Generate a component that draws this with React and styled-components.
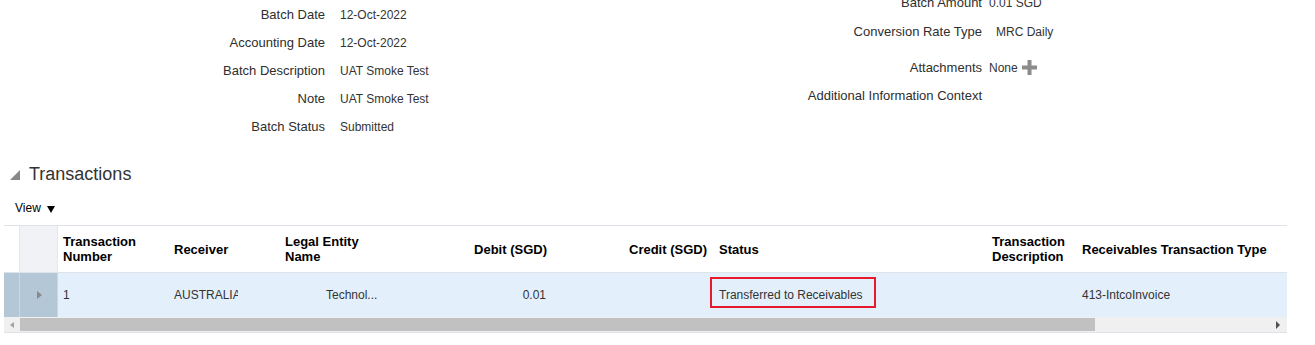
import React from "react";
import styled, { createGlobalStyle } from "styled-components";

const Global = createGlobalStyle`
  html, body { margin: 0; padding: 0; background: #fff; overflow: hidden; }
  body { font-family: "Liberation Sans", Arial, sans-serif; color: #333; }
`;

const Page = styled.div`
  width: 1315px;
  height: 345px;
  overflow: hidden;
`;

const Form = styled.div`
  display: flex;
  align-items: flex-start;
`;

const LeftFields = styled.div`
  width: 660px;
  display: grid;
  grid-template-columns: 325px auto;
  column-gap: 15px;
  grid-auto-rows: 28px;
  align-items: center;
`;

const RightFields = styled.div`
  margin-top: -12px;
  display: flex;
  flex-direction: column;
`;

const RightRow = styled.div`
  display: grid;
  grid-template-columns: 322px auto;
  column-gap: 7px;
  height: 28px;
  align-items: center;
  margin-top: ${(p) => p.$mt || 0}px;
`;

const Label = styled.div`
  text-align: right;
  font-size: 13px;
  color: #2e2e2e;
  white-space: nowrap;
`;

const Value = styled.div`
  font-size: 12px;
  color: #333;
  white-space: nowrap;
  padding-top: 1px;
  padding-left: ${(p) => p.$indent || 0}px;
  display: flex;
  align-items: center;
  gap: 4px;
`;

const PlusIcon = styled.svg`
  width: 15px;
  height: 15px;
  display: block;
`;

const SectionHeader = styled.div`
  margin-top: 20px;
  height: 28px;
  display: flex;
  align-items: center;
  padding-left: 10px;
  gap: 9px;
`;

const Disclosure = styled.span`
  width: 0;
  height: 0;
  border-style: solid;
  border-width: 0 0 10px 10px;
  border-color: transparent transparent #888 transparent;
  margin-top: 1px;
`;

const SectionTitle = styled.h2`
  margin: 0;
  font-size: 18px;
  font-weight: normal;
  color: #333;
`;

const Toolbar = styled.div`
  margin-top: 8px;
  height: 24px;
  display: flex;
  align-items: center;
  padding-left: 15px;
  gap: 6px;
  font-size: 12px;
  color: #000;
`;

const DownCaret = styled.span`
  width: 0;
  height: 0;
  border-style: solid;
  border-width: 7px 4.5px 0 4.5px;
  border-color: #000 transparent transparent transparent;
  margin-top: 2px;
`;

const Table = styled.div`
  margin: 5px 0 0 4px;
  width: 1283px;
  border-top: 1px solid #dde3e8;
  border-bottom: 1px solid #dde3e8;
`;

const COLS = "16px 38px 110px 111px 112px 161px 160px 275px 90px 210px";

const Row = styled.div`
  display: grid;
  grid-template-columns: ${COLS};
  height: ${(p) => p.$h}px;
  background: ${(p) => p.$bg || "#fff"};
  border-bottom: ${(p) => (p.$line ? "1px solid #dde3e8" : "none")};
`;

const Gutter = styled.div`
  background: ${(p) => p.$bg};
  border-right: 1px solid ${(p) => p.$line};
`;

const Selector = styled.div`
  background: ${(p) => p.$bg};
  border-right: 1px solid ${(p) => p.$line};
  display: flex;
  align-items: center;
  justify-content: center;
`;

const RowArrow = styled.span`
  width: 0;
  height: 0;
  border-style: solid;
  border-width: 4.5px 0 4.5px 5px;
  border-color: transparent transparent transparent #8a8a8a;
  margin-left: 1px;
`;

const HeadCell = styled.div`
  display: flex;
  align-items: center;
  justify-content: ${(p) => (p.$right ? "flex-end" : "flex-start")};
  text-align: ${(p) => (p.$right ? "right" : "left")};
  padding: 0 ${(p) => (p.$right ? "5px" : "0")} 0 ${(p) => p.$pl ?? 5}px;
  font-size: 13px;
  font-weight: bold;
  line-height: 15px;
  color: #000;
`;

const Cell = styled.div`
  position: relative;
  display: flex;
  align-items: center;
  justify-content: ${(p) => (p.$right ? "flex-end" : "flex-start")};
  padding: 0 ${(p) => (p.$right ? "6px" : "0")} 0 ${(p) => p.$pl ?? 5}px;
  font-size: 12px;
  color: #333;
  white-space: nowrap;
  overflow: ${(p) => (p.$visible ? "visible" : "hidden")};
`;

const Clip = styled.span`
  display: block;
  max-width: ${(p) => p.$w}px;
  overflow: hidden;
  white-space: nowrap;
`;

const Highlight = styled.span`
  position: absolute;
  left: -2px;
  top: 4px;
  width: 166px;
  height: 31px;
  box-sizing: border-box;
  border: 2px solid #e8192c;
  pointer-events: none;
`;

const Scrollbar = styled.div`
  display: flex;
  height: 15px;
  background: #f0f0f0;
`;

const ScrollEnd = styled.div`
  width: 16px;
  display: flex;
  align-items: center;
  justify-content: center;
`;

const Thumb = styled.div`
  width: 1075px;
  background: #c1c1c1;
  margin: 1px 0;
`;

const Track = styled.div`
  flex: 1;
  display: flex;
  justify-content: flex-end;
  align-items: center;
`;

const ArrowLeft = styled.span`
  width: 0;
  height: 0;
  border-style: solid;
  border-width: 3.5px 4px 3.5px 0;
  border-color: transparent #a3a3a3 transparent transparent;
`;

const ArrowRight = styled.span`
  width: 0;
  height: 0;
  border-style: solid;
  border-width: 4px 0 4px 4px;
  border-color: transparent transparent transparent #505050;
  margin-right: 7px;
`;

const leftFields = [
  ["Batch Date", "12-Oct-2022"],
  ["Accounting Date", "12-Oct-2022"],
  ["Batch Description", "UAT Smoke Test"],
  ["Note", "UAT Smoke Test"],
  ["Batch Status", "Submitted"],
];

export default function App() {
  return (
    <Page>
      <Global />
      <Form>
        <LeftFields>
          {leftFields.map(([l, v]) => (
            <React.Fragment key={l}>
              <Label>{l}</Label>
              <Value>{v}</Value>
            </React.Fragment>
          ))}
        </LeftFields>
        <RightFields>
          <RightRow>
            <Label>Batch Amount</Label>
            <Value>0.01 SGD</Value>
          </RightRow>
          <RightRow $mt={1}>
            <Label>Conversion Rate Type</Label>
            <Value $indent={7}>MRC Daily</Value>
          </RightRow>
          <RightRow $mt={8}>
            <Label>Attachments</Label>
            <Value>
              None
              <PlusIcon viewBox="0 0 15 15">
                <rect x="5.5" y="0" width="4" height="15" fill="#8c8c8c" />
                <rect x="0" y="5.5" width="15" height="4" fill="#8c8c8c" />
              </PlusIcon>
            </Value>
          </RightRow>
          <RightRow>
            <Label>Additional Information Context</Label>
            <Value />
          </RightRow>
        </RightFields>
      </Form>

      <SectionHeader>
        <Disclosure />
        <SectionTitle>Transactions</SectionTitle>
      </SectionHeader>

      <Toolbar>
        View <DownCaret />
      </Toolbar>

      <Table>
        <Row $h={46} $line>
          <Gutter $bg="#fff" $line="#e4e8ec" />
          <Selector $bg="#f1f2f5" $line="#e4e8ec" />
          <HeadCell>Transaction<br />Number</HeadCell>
          <HeadCell $pl={6}>Receiver</HeadCell>
          <HeadCell $pl={6}>Legal Entity<br />Name</HeadCell>
          <HeadCell $right>Debit (SGD)</HeadCell>
          <HeadCell $right>Credit (SGD)</HeadCell>
          <HeadCell $pl={7}>Status</HeadCell>
          <HeadCell>Transaction<br />Description</HeadCell>
          <HeadCell>Receivables Transaction Type</HeadCell>
        </Row>
        <Row $h={44} $bg="#e3effb">
          <Gutter $bg="#b3c7d7" $line="#c9d7e2" />
          <Selector $bg="#b3c7d7" $line="#c9d7e2">
            <RowArrow />
          </Selector>
          <Cell>1</Cell>
          <Cell $pl={6}>
            <Clip $w={64}>AUSTRALIA PTY LTD</Clip>
          </Cell>
          <Cell $pl={47}>Technol...</Cell>
          <Cell $right>0.01</Cell>
          <Cell $right />
          <Cell $visible $pl={7}>
            Transferred to Receivables
            <Highlight />
          </Cell>
          <Cell />
          <Cell>413-IntcoInvoice</Cell>
        </Row>
        <Scrollbar>
          <ScrollEnd>
            <ArrowLeft />
          </ScrollEnd>
          <Thumb />
          <Track>
            <ArrowRight />
          </Track>
        </Scrollbar>
      </Table>
    </Page>
  );
}
